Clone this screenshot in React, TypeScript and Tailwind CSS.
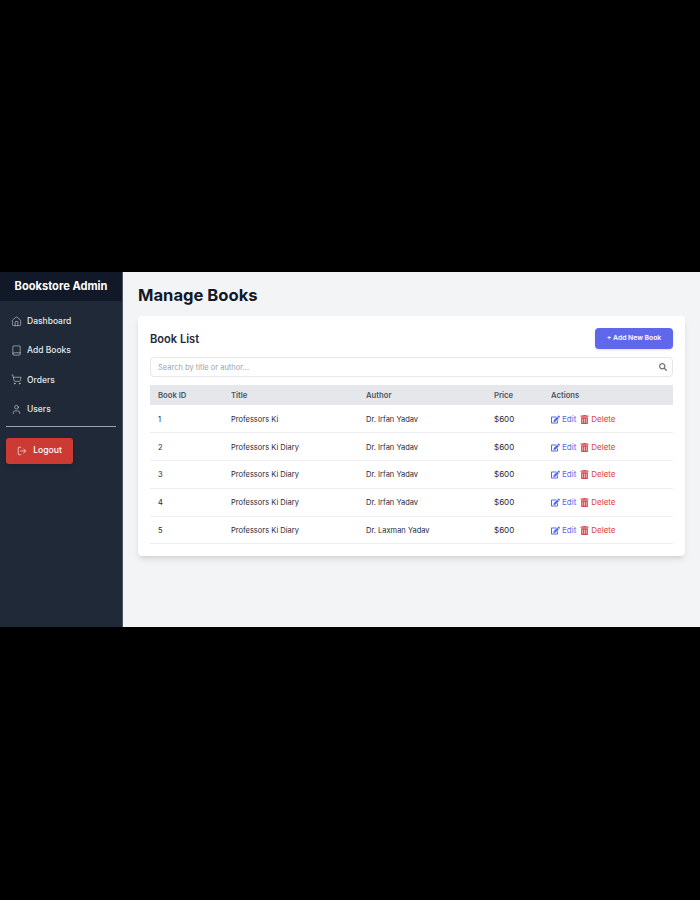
import React from "react";
import { FaEdit, FaSearch, FaTrashAlt } from "react-icons/fa";
import { Book, House, LogOut, ShoppingCart, User } from "lucide-react";

const navItems = [
  { label: "Dashboard", icon: House },
  { label: "Add Books", icon: Book },
  { label: "Orders", icon: ShoppingCart },
  { label: "Users", icon: User },
];

const books = [
  { id: 1, title: "Professors Ki", author: "Dr. Irfan Yadav", price: "$600" },
  { id: 2, title: "Professors Ki Diary", author: "Dr. Irfan Yadav", price: "$600" },
  { id: 3, title: "Professors Ki Diary", author: "Dr. Irfan Yadav", price: "$600" },
  { id: 4, title: "Professors Ki Diary", author: "Dr. Irfan Yadav", price: "$600" },
  { id: 5, title: "Professors Ki Diary", author: "Dr. Laxman Yadav", price: "$600" },
];

const App: React.FC = () => {
  return (
    <div className="h-[900px] bg-black pt-[272px] font-['Inter',sans-serif]">
      <div className="flex h-[355px] w-full">
        {/* sidebar */}
        <aside className="w-[123px] shrink-0 border-r border-[#4b5563] bg-[#1f2937]">
          <div className="flex h-[29px] items-center justify-center bg-[#111827] text-[11.1px] font-bold text-white">
            Bookstore Admin
          </div>
          <nav className="px-[6px] pt-[6px]">
            {navItems.map((item) => {
              const Icon = item.icon;
              return (
                <div key={item.label} className="flex h-[29.2px] items-center gap-[6px] pl-[6px] text-[8.5px] font-medium text-[#e5e7eb]">
                  <Icon size={11} strokeWidth={1.2} className="-ml-[1px] shrink-0 -mr-[1px]" />
                  {item.label}
                </div>
              );
            })}
            <div className="mt-[2px] border-t border-[#9ca3af]" />
            <button className="mt-[11px] flex h-[26px] w-[67px] items-center justify-center gap-[6px] rounded-[3px] bg-[#cc3b33] text-[8.6px] font-medium text-white shadow-md">
              <LogOut size={10} strokeWidth={1.5} />
              Logout
            </button>
          </nav>
        </aside>

        {/* main */}
        <main className="flex-1 bg-[#f3f4f6] px-[15px]">
          <h1 className="flex h-[44px] items-center pt-[3px] text-[16.6px] font-bold text-[#111827]">Manage Books</h1>
          <section className="rounded-[4px] bg-white px-[12px] pt-[12px] pb-[12px] shadow-md">
            <div className="flex h-[21px] items-center justify-between">
              <h2 className="pt-[1px] text-[11.1px] font-semibold text-[#1f2937]">Book List</h2>
              <button className="h-[21px] w-[78px] rounded-[4px] bg-[#5f67ea] text-[6.8px] font-semibold text-white shadow-sm">
                + Add New Book
              </button>
            </div>
            <div className="mt-[8px] flex h-[20px] items-center justify-between rounded-[4px] border border-[#e5e7eb] pr-[5px] pl-[7px]">
              <span className="pt-[1px] text-[7.5px] text-[#9ca3af]">Search by title or author...</span>
              <FaSearch size={8} className="text-[#6b7280]" />
            </div>
            <table className="mt-[8px] w-full table-fixed text-left text-[7.5px] text-[#1f2937]">
              <colgroup>
                <col className="w-[73px]" />
                <col className="w-[135px]" />
                <col className="w-[128px]" />
                <col className="w-[57px]" />
                <col />
              </colgroup>
              <thead>
                <tr className="h-[20px] bg-[#e5e7eb] text-[7.7px] font-semibold text-[#4b5563]">
                  <th className="pt-[1px] pl-[8px] font-semibold">Book ID</th>
                  <th className="pt-[1px] pl-[8px] font-semibold">Title</th>
                  <th className="pt-[1px] pl-[8px] font-semibold">Author</th>
                  <th className="pt-[1px] pl-[8px] font-semibold">Price</th>
                  <th className="pt-[1px] pl-[8px] font-semibold">Actions</th>
                </tr>
              </thead>
              <tbody>
                {books.map((book) => (
                  <tr key={book.id} className="h-[27.8px] border-b border-[#eceef1]">
                    <td className="pt-[1px] pl-[8px]">{book.id}</td>
                    <td className="pt-[1px] pl-[8px]">{book.title}</td>
                    <td className="pt-[1px] pl-[8px]">{book.author}</td>
                    <td className="pl-[8px] text-[8px]">{book.price}</td>
                    <td className="pl-[8px] text-[8px]">
                      <div className="flex items-center">
                        <FaEdit size={9} className="mt-[1px] text-[#4f6bed]" />
                        <span className="ml-[2px] text-[#4f6bed]">Edit</span>
                        <FaTrashAlt size={9} className="ml-[4px] mt-[1px] text-[#d9474a]" />
                        <span className="ml-[2px] text-[#dc3f3f]">Delete</span>
                      </div>
                    </td>
                  </tr>
                ))}
              </tbody>
            </table>
          </section>
        </main>
      </div>
    </div>
  );
};

export default App;
